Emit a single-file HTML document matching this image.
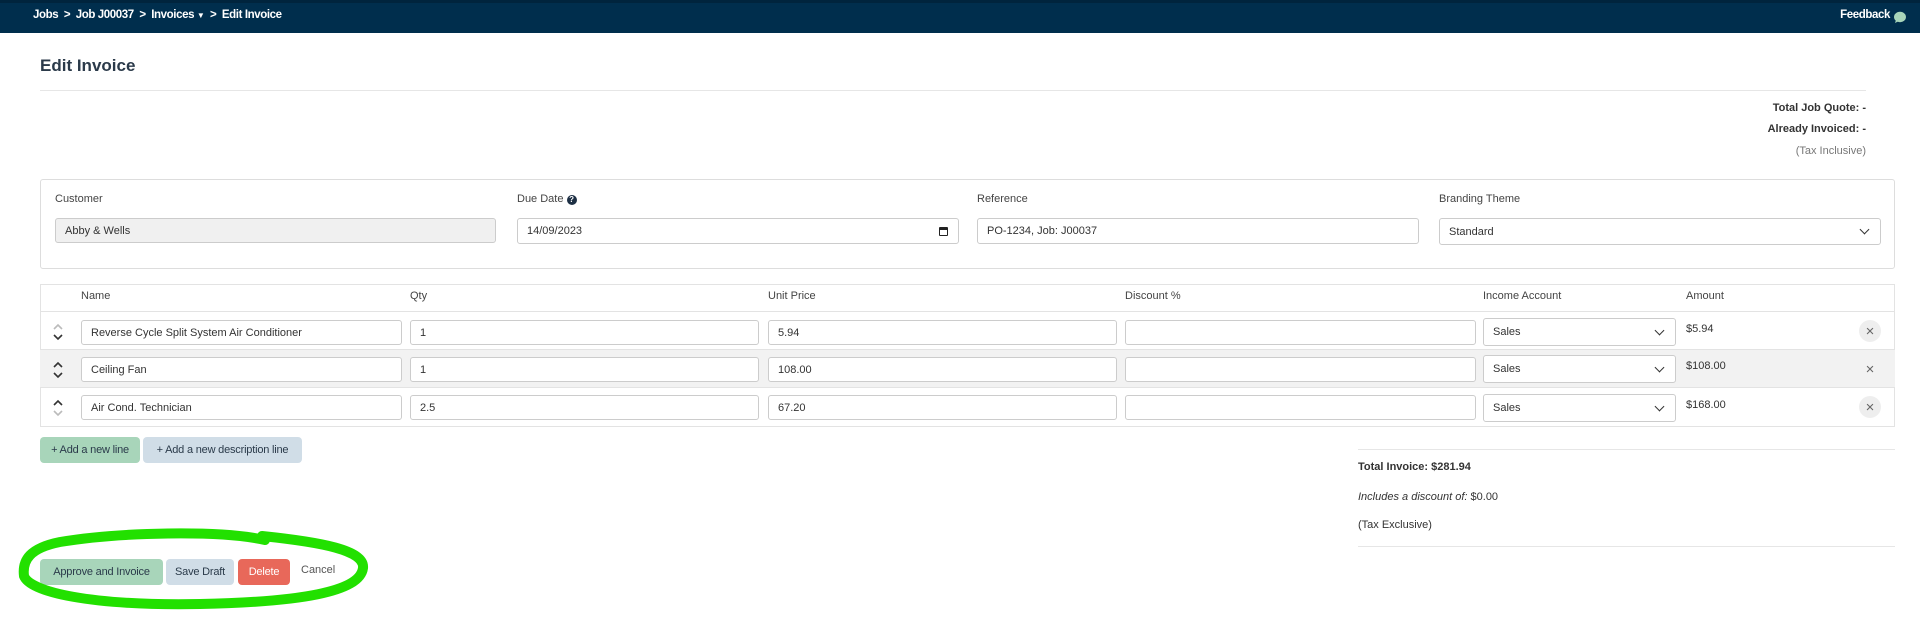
<!DOCTYPE html>
<html><head><meta charset="utf-8"><style>
*{box-sizing:border-box;margin:0;padding:0}
body{width:1920px;height:622px;background:#fff;font-family:"Liberation Sans",sans-serif;color:#333;position:relative;overflow:hidden;font-size:12px}
.a{position:absolute}
.nav{left:0;top:0;width:1920px;height:33px;background:#002e4d;border-top:3px solid #00243d}
.nav span{color:#fff;font-size:11.5px;font-weight:bold;letter-spacing:-0.4px}
.inp{position:absolute;border:1px solid #ccc;border-radius:3px;background:#fff;font-size:11px;padding-left:9px;display:flex;align-items:center;color:#333}
.lbl{position:absolute;font-size:11px;color:#444}
.row{position:absolute;left:40px;width:1855px;height:38px;border-bottom:1px solid #e3e3e3}
.btn{position:absolute;border-radius:4px;font-size:11px;display:flex;align-items:center;justify-content:center;color:#2a3a4a;letter-spacing:-0.2px}
.chev{position:absolute;width:7px;height:7px;border-right:1.8px solid #333;border-bottom:1.8px solid #333;transform:rotate(45deg)}
.x{position:absolute;width:22px;height:22px;border-radius:50%;background:#eee;color:#666;font-size:15px;display:flex;align-items:center;justify-content:center}
.tr{position:absolute;right:54px;font-size:11px;font-weight:bold;color:#333;text-align:right}
</style></head><body>
<div class="a nav"><span class="a" style="left:33px;top:6px">Jobs &nbsp;&gt;&nbsp; Job J00037 &nbsp;&gt;&nbsp; Invoices <span style="font-size:8px">▼</span> &nbsp;&gt;&nbsp; Edit Invoice</span>
<span class="a" style="right:30px;top:6px">Feedback</span>
<svg class="a" style="left:1893px;top:8px" width="14" height="13"><ellipse cx="7" cy="6" rx="6" ry="5.2" fill="#a8d5ba"/><path d="M3 9 L2 12 L6 10z" fill="#a8d5ba"/></svg></div>
<div class="a" style="left:40px;top:56px;font-size:17px;font-weight:bold;color:#2b3a4a">Edit Invoice</div>
<div class="a" style="left:40px;top:90px;width:1826px;height:1px;background:#e6e6e6"></div>
<div class="tr" style="top:102px">Total Job Quote: -</div>
<div class="tr" style="top:123px">Already Invoiced: -</div>
<div class="tr" style="top:145px;font-weight:normal;color:#777">(Tax Inclusive)</div>

<div class="a" style="left:40px;top:179px;width:1855px;height:90px;border:1px solid #ddd;border-radius:3px"></div>
<div class="lbl" style="left:55px;top:193px">Customer</div>
<div class="lbl" style="left:517px;top:193px">Due Date <span style="display:inline-block;width:10px;height:10px;border-radius:50%;background:#1d2f44;color:#fff;font-size:8px;text-align:center;line-height:10px;font-weight:bold">?</span></div>
<div class="lbl" style="left:977px;top:193px">Reference</div>
<div class="lbl" style="left:1439px;top:193px">Branding Theme</div>
<div class="inp" style="left:55px;top:218px;width:441px;height:25px;background:#f0f0f0">Abby &amp; Wells</div>
<div class="inp" style="left:517px;top:218px;width:442px;height:26px">14/09/2023<span style="position:absolute;right:10px;top:8px;width:9px;height:9px;border:1.5px solid #222;border-top-width:3px;border-radius:1px"></span></div>
<div class="inp" style="left:977px;top:218px;width:442px;height:26px">PO-1234, Job: J00037</div>
<div class="inp" style="left:1439px;top:218px;width:442px;height:27px">Standard<span class="chev" style="right:12px;top:7px"></span></div>

<div class="a" style="left:40px;top:284px;width:1855px;height:143px;border:1px solid #e3e3e3"></div>
<div class="row" style="top:284px;height:28px"></div>
<div class="lbl" style="left:81px;top:290px">Name</div>
<div class="lbl" style="left:410px;top:290px">Qty</div>
<div class="lbl" style="left:768px;top:290px">Unit Price</div>
<div class="lbl" style="left:1125px;top:290px">Discount %</div>
<div class="lbl" style="left:1483px;top:290px">Income Account</div>
<div class="lbl" style="left:1686px;top:290px">Amount</div>

<div class="row" style="top:312px"></div>
<div class="row" style="top:350px;background:#f2f2f2"></div>
<div class="row" style="top:388px;border-bottom:none"></div>

<div class="inp" style="left:81px;top:320px;width:321px;height:25px">Reverse Cycle Split System Air Conditioner</div>
<div class="inp" style="left:410px;top:320px;width:349px;height:25px">1</div>
<div class="inp" style="left:768px;top:320px;width:349px;height:25px">5.94</div>
<div class="inp" style="left:1125px;top:320px;width:351px;height:25px"></div>
<div class="inp" style="left:1483px;top:318px;width:193px;height:28px">Sales<span class="chev" style="right:12px;top:8px"></span></div>
<div class="a" style="left:1686px;top:323px;font-size:11px">$5.94</div>
<div class="x" style="left:1859px;top:320px">×</div>

<div class="inp" style="left:81px;top:357px;width:321px;height:25px">Ceiling Fan</div>
<div class="inp" style="left:410px;top:357px;width:349px;height:25px">1</div>
<div class="inp" style="left:768px;top:357px;width:349px;height:25px">108.00</div>
<div class="inp" style="left:1125px;top:357px;width:351px;height:25px"></div>
<div class="inp" style="left:1483px;top:355px;width:193px;height:28px">Sales<span class="chev" style="right:12px;top:8px"></span></div>
<div class="a" style="left:1686px;top:360px;font-size:11px">$108.00</div>
<div class="x" style="left:1859px;top:358px;background:none">×</div>

<div class="inp" style="left:81px;top:395px;width:321px;height:25px">Air Cond. Technician</div>
<div class="inp" style="left:410px;top:395px;width:349px;height:25px">2.5</div>
<div class="inp" style="left:768px;top:395px;width:349px;height:25px">67.20</div>
<div class="inp" style="left:1125px;top:395px;width:351px;height:25px"></div>
<div class="inp" style="left:1483px;top:394px;width:193px;height:28px">Sales<span class="chev" style="right:12px;top:8px"></span></div>
<div class="a" style="left:1686px;top:399px;font-size:11px">$168.00</div>
<div class="x" style="left:1859px;top:396px">×</div>

<svg class="a" style="left:52px;top:322px" width="14" height="100" fill="none" stroke-width="1.6">
<path d="M2 7 L6 3 L10 7" stroke="#bbb"/><path d="M2 13 L6 17 L10 13" stroke="#333"/>
<path d="M2 45 L6 41 L10 45" stroke="#333"/><path d="M2 51 L6 55 L10 51" stroke="#333"/>
<path d="M2 83 L6 79 L10 83" stroke="#333"/><path d="M2 89 L6 93 L10 89" stroke="#bbb"/>
</svg>

<div class="btn" style="left:40px;top:437px;width:100px;height:26px;background:#a8d5ba">+ Add a new line</div>
<div class="btn" style="left:143px;top:437px;width:159px;height:26px;background:#d0dde7">+ Add a new description line</div>

<div class="a" style="left:1358px;top:449px;width:537px;height:1px;background:#e6e6e6"></div>
<div class="a" style="left:1358px;top:461px;font-size:11px;font-weight:bold">Total Invoice: $281.94</div>
<div class="a" style="left:1358px;top:491px;font-size:11px"><i>Includes a discount of:</i> $0.00</div>
<div class="a" style="left:1358px;top:519px;font-size:11px">(Tax Exclusive)</div>
<div class="a" style="left:1358px;top:546px;width:537px;height:1px;background:#e6e6e6"></div>

<div class="btn" style="left:40px;top:559px;width:123px;height:26px;background:#a8d5ba">Approve and Invoice</div>
<div class="btn" style="left:166px;top:559px;width:68px;height:26px;background:#d0dde7">Save Draft</div>
<div class="btn" style="left:238px;top:559px;width:52px;height:26px;background:#e8685a;color:#fff">Delete</div>
<div class="a" style="left:301px;top:564px;font-size:11px;color:#555">Cancel</div>

<svg class="a" style="left:0;top:520px" width="400" height="102" fill="none">
<path d="M265 20 C220 10 120 12 60 22 C30 28 22 40 24 56 C30 72 90 86 200 84 C300 82 360 72 363 48 C365 30 320 22 262 16" stroke="#22e000" stroke-width="10" stroke-linecap="round"/>
</svg>
</body></html>
